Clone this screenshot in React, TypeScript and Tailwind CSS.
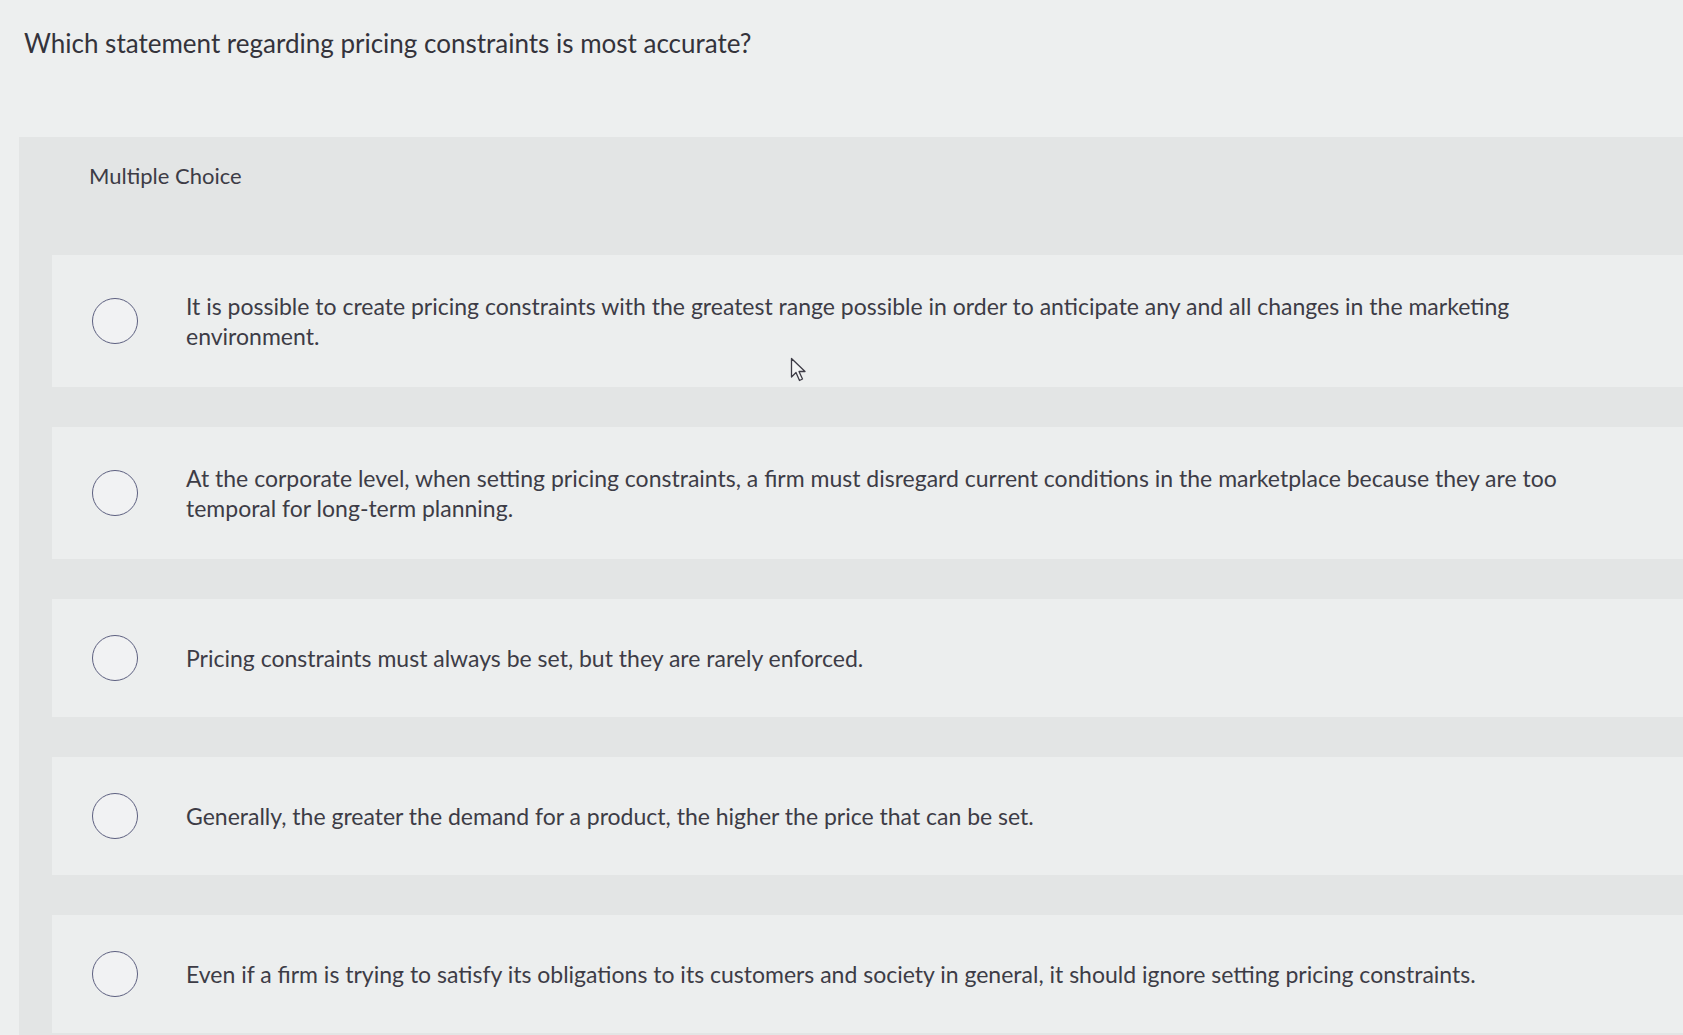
const options = [
  'It is possible to create pricing constraints with the greatest range possible in order to anticipate any and all changes in the marketing environment.',
  'At the corporate level, when setting pricing constraints, a firm must disregard current conditions in the marketplace because they are too temporal for long-term planning.',
  'Pricing constraints must always be set, but they are rarely enforced.',
  'Generally, the greater the demand for a product, the higher the price that can be set.',
  'Even if a firm is trying to satisfy its obligations to its customers and society in general, it should ignore setting pricing constraints.',
];

export default function App() {
  return (
    <div className="relative min-h-[1035px] bg-[#edefef] pt-[27px] font-['Lato',sans-serif] text-[#3d3c46]">
      <h1 className="pl-[24px] text-[26px] leading-[32px] text-[#34333b]">
        Which statement regarding pricing constraints is most accurate?
      </h1>

      <section className="ml-[19px] mt-[78px] bg-[#e3e5e5] pt-[24px] pb-[40px]">
        <div className="pl-[70px] text-[22px] leading-[30px]">Multiple Choice</div>

        <div className="mt-[64px] ml-[33px] flex flex-col gap-[40px]">
          {options.map((text, i) => (
            <label key={i} className="flex items-center bg-[#eceeee] py-[36px] pl-[40px] pr-[96px] cursor-pointer">
              <span className="h-[46px] w-[46px] shrink-0 rounded-full border-[1.5px] border-[#5d6080] bg-[#f1f2f3]" />
              <span className="ml-[48px] text-[23px] leading-[30px]">{text}</span>
            </label>
          ))}
        </div>
      </section>

      {/* mouse pointer */}
      <svg className="absolute left-[790px] top-[357px]" width="18" height="26" viewBox="0 0 18 26">
        <path d="M1.5 1.5 L1.5 20 L6 15.5 L9.5 23.5 L12.5 22 L9 14.5 L15 14.5 Z" fill="#f4f5f5" stroke="#3d3c46" strokeWidth="1.3" strokeLinejoin="round" />
      </svg>
    </div>
  );
}
